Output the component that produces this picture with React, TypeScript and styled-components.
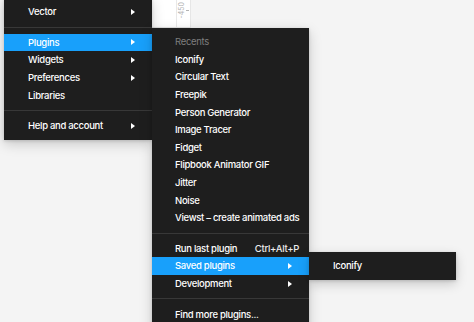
import styled, { createGlobalStyle } from "styled-components";

const Global = createGlobalStyle`
  html, body {
    margin: 0;
    padding: 0;
    background: #f4f4f4;
  }
  body {
    font-family: Inter, "Noto Sans", sans-serif;
  }
`;

const Canvas = styled.div`
  position: relative;
  width: 474px;
  height: 322px;
  overflow: hidden;
  background: #f4f4f4;
`;

const RulerCorner = styled.div`
  position: absolute;
  left: 152px;
  top: 0;
  width: 38px;
  height: 27px;
  display: grid;
  grid-template-columns: 24px 14px;
  background: #ffffff;
  border-bottom: 1px solid #e6e6e6;
  border-right: 1px solid #e6e6e6;
`;

const RulerStrip = styled.div`
  grid-column: 2;
  border-left: 1px solid #e8e8e8;
  display: flex;
  align-items: flex-start;
  justify-content: flex-start;
  position: relative;
`;

const RulerText = styled.span`
  display: block;
  margin: 2px 0 0 1px;
  writing-mode: vertical-rl;
  transform: rotate(180deg);
  font-size: 7px;
  line-height: 7px;
  color: #b3b3b3;
`;

const RulerTick = styled.span`
  position: absolute;
  left: 9px;
  top: 10px;
  width: 3px;
  height: 1px;
  background: #b3b3b3;
`;

const Menu = styled.div<{ $left: number; $top: number; $width: number; $height: number }>`
  position: absolute;
  left: ${(p) => p.$left}px;
  top: ${(p) => p.$top}px;
  width: ${(p) => p.$width}px;
  height: ${(p) => p.$height}px;
  box-sizing: border-box;
  padding: 5px 0 6px;
  background: #1e1e1e;
  box-shadow: 0 4px 12px rgba(0, 0, 0, 0.18), 0 1px 3px rgba(0, 0, 0, 0.15);
  display: flex;
  flex-direction: column;
`;

const Item = styled.div<{ $active?: boolean; $indent: number }>`
  height: 17.6px;
  flex-shrink: 0;
  display: flex;
  align-items: center;
  padding: 0 10px 0 ${(p) => p.$indent}px;
  background: ${(p) => (p.$active ? "#18a0fb" : "transparent")};
  color: #ffffff;
  font-size: 9.5px;
  font-weight: 500;
  letter-spacing: -0.3px;
  white-space: nowrap;
`;

const Label = styled.span`
  flex: 1;
`;

const Header = styled(Item)`
  color: #7d7d7d;
  font-weight: 400;
`;

const Shortcut = styled.span`
  color: #ececec;
`;

const Arrow = styled.span`
  width: 0;
  height: 0;
  margin-right: 7px;
  border-top: 3px solid transparent;
  border-bottom: 3px solid transparent;
  border-left: 4px solid #ffffff;
`;

const Separator = styled.div`
  height: 1px;
  flex-shrink: 0;
  margin: 6px 0;
  background: #383838;
`;

type Row = { label: string; arrow?: boolean; active?: boolean; shortcut?: string };

const renderRows = (rows: (Row | "sep")[], indent: number) =>
  rows.map((r, i) =>
    r === "sep" ? (
      <Separator key={i} />
    ) : (
      <Item key={i} $active={r.active} $indent={indent}>
        <Label>{r.label}</Label>
        {r.shortcut && <Shortcut>{r.shortcut}</Shortcut>}
        {r.arrow && <Arrow />}
      </Item>
    )
  );

const mainRows: (Row | "sep")[] = [
  { label: "Vector", arrow: true },
  "sep",
  { label: "Plugins", arrow: true, active: true },
  { label: "Widgets", arrow: true },
  { label: "Preferences", arrow: true },
  { label: "Libraries" },
  "sep",
  { label: "Help and account", arrow: true },
];

const recents = [
  "Iconify",
  "Circular Text",
  "Freepik",
  "Person Generator",
  "Image Tracer",
  "Fidget",
  "Flipbook Animator GIF",
  "Jitter",
  "Noise",
  "Viewst – create animated ads",
];

const pluginRows: (Row | "sep")[] = [
  ...recents.map((label) => ({ label })),
  "sep",
  { label: "Run last plugin", shortcut: "Ctrl+Alt+P" },
  { label: "Saved plugins", arrow: true, active: true },
  { label: "Development", arrow: true },
  "sep",
  { label: "Find more plugins..." },
];

export default function App() {
  return (
    <>
      <Global />
      <Canvas>
        <RulerCorner>
          <RulerStrip>
            <RulerText>-450</RulerText>
            <RulerTick />
          </RulerStrip>
        </RulerCorner>

        <Menu $left={4} $top={-2} $width={148} $height={142}>
          {renderRows(mainRows, 24)}
        </Menu>

        <Menu $left={152} $top={28} $width={157} $height={310}>
          <Header $indent={23}>Recents</Header>
          {renderRows(pluginRows, 23)}
        </Menu>

        <Menu $left={309} $top={252} $width={147} $height={28}>
          {renderRows([{ label: "Iconify" }], 24)}
        </Menu>
      </Canvas>
    </>
  );
}
